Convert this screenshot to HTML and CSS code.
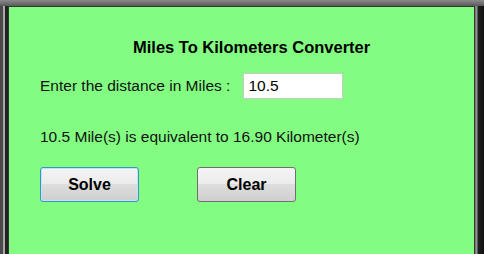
FILE: index.html
```html
<!DOCTYPE html>
<html lang="en">
<head>
    <meta charset="UTF-8">
    <title>Miles To Kilometers Converter</title>
    <link rel="stylesheet" href="styles.css">
</head>
<body>
    <div class="frame">
        <div class="client">
            <h2 class="title">Miles To Kilometers Converter</h2>

            <div class="input-row">
                <label for="miles">Enter the distance in Miles :</label>
                <input type="text" id="miles" class="miles-box" value="10.5">
            </div>

            <p class="result">10.5 Mile(s) is equivalent to 16.90 Kilometer(s)</p>

            <div class="buttons">
                <button class="btn btn-focus">Solve</button>
                <button class="btn">Clear</button>
            </div>
        </div>
    </div>
</body>
</html>
```

FILE: styles.css
```css
html, body {
    margin: 0;
    padding: 0;
    height: 100%;
    overflow: hidden;
}
body {
    background: #1b1b1b;
    font-family: 'Liberation Sans', Arial, sans-serif;
    color: #000;
}
.frame {
    height: 100%;
    box-sizing: border-box;
    padding: 6px 9px 0 8px;
    background:
        linear-gradient(to bottom, #8a8a8a 0, #5a5a5a 6px, transparent 6px),
        linear-gradient(to right, #4a4a4a 0, #4a4a4a 3px, #a9a9a9 3px, #a9a9a9 5px, #222 5px, #222 8px,
            transparent 8px, transparent 475px, #707070 475px, #9a9a9a 477px, #202020 478px, #111 484px);
}
.client {
    height: 100%;
    box-sizing: border-box;
    background: #82fd82;
    border: 1px solid #2e3a2e;
    border-bottom: none;
    padding: 0 0 0 31px;
}
.title {
    margin: 30px 0 0 0;
    font-size: 16.5px;
    line-height: 20px;
    font-weight: bold;
    text-indent: 93px;
}
.input-row {
    display: flex;
    align-items: center;
    gap: 13px;
    margin-top: 16px;
}
.input-row label {
    font-size: 15.5px;
    line-height: 20px;
    color: #111;
}
.miles-box {
    width: 100px;
    height: 26px;
    box-sizing: border-box;
    border: 1px solid #c8c8c8;
    padding: 0 4px;
    font-family: 'Liberation Sans', Arial, sans-serif;
    font-size: 15.5px;
    color: #000;
    background: #fff;
    outline: none;
}
.result {
    margin: 28px 0 0 0;
    font-size: 15.5px;
    line-height: 20px;
    color: #111;
}
.buttons {
    display: flex;
    gap: 58px;
    margin-top: 20px;
}
.btn {
    width: 99px;
    height: 35px;
    border: 1px solid #707070;
    border-radius: 3px;
    background: linear-gradient(to bottom, #f4f4f4 0, #ebebeb 50%, #dddddd 50%, #cfcfcf 100%);
    font-family: 'Liberation Sans', Arial, sans-serif;
    font-size: 16px;
    font-weight: bold;
    color: #000;
    padding: 0;
}
.btn-focus {
    border-color: #3c94c4;
    box-shadow: inset 0 0 0 1px #bfe4f6;
}
```
